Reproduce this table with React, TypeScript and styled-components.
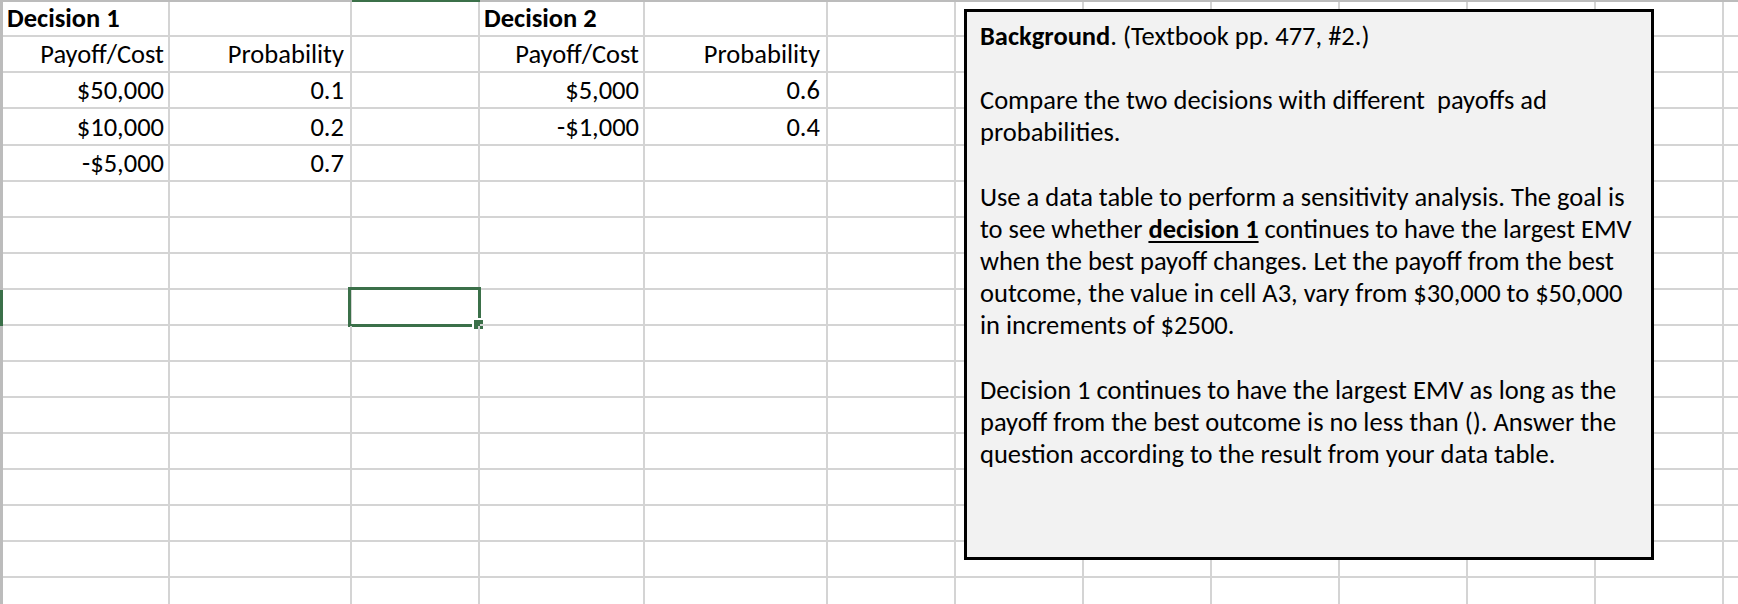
import React from "react";
import styled, { createGlobalStyle, css } from "styled-components";

const GRID = "#d4d4d4";
const EDGE = "#bcbcbc";
const GREEN = "#3b7049";
const FONT = `"Carlito", "Lato", "Liberation Sans", sans-serif`;

const GlobalStyle = createGlobalStyle`
  html, body { margin: 0; padding: 0; background: #fff; }
  body { width: 1738px; height: 604px; overflow: hidden; font-family: ${FONT}; }
`;

const Sheet = styled.div`
  position: relative;
  width: 1738px;
  height: 604px;
  overflow: hidden;
  display: grid;
  grid-template-columns: 3px 167px 182px 128px 165px 183px repeat(8, 128px);
  grid-template-rows: 2px 35px 36px 36px 37px repeat(13, 36px);
  background: #fff;
`;

const Corner = styled.div`
  background: ${EDGE};
`;

const ColEdge = styled.div<{ $selected?: boolean }>`
  background: ${(p) => (p.$selected ? GREEN : EDGE)};
`;

const RowEdge = styled.div<{ $selected?: boolean }>`
  background: ${(p) => (p.$selected ? GREEN : EDGE)};
`;

const Cell = styled.div<{ $align?: "left" | "right"; $bold?: boolean; $padRight: number }>`
  position: relative;
  box-sizing: border-box;
  border-right: 2px solid ${GRID};
  border-bottom: 2px solid ${GRID};
  display: flex;
  align-items: flex-end;
  justify-content: ${(p) => (p.$align === "right" ? "flex-end" : "flex-start")};
  padding: 0 ${(p) => p.$padRight}px 3px 4px;
  font-family: ${FONT};
  font-size: 26.5px;
  line-height: 27px;
  color: #000;
  white-space: nowrap;
  ${(p) =>
    p.$bold &&
    css`
      font-weight: 700;
    `}
`;

const Selection = styled.div`
  position: absolute;
  left: -4px;
  top: -3px;
  right: -3px;
  bottom: -3px;
  border: 3px solid ${GREEN};
  pointer-events: none;
`;

const FillHandle = styled.div`
  position: absolute;
  right: -7px;
  bottom: -7px;
  width: 9px;
  height: 9px;
  background: ${GREEN};
  border: 2px solid #fff;
`;

const TextBox = styled.div`
  position: absolute;
  left: 964px;
  top: 9px;
  width: 690px;
  height: 551px;
  box-sizing: border-box;
  border: 3px solid #000;
  background: #f2f2f2;
  padding: 8px 0 0 13px;
  font-family: ${FONT};
  font-size: 26.5px;
  line-height: 32.15px;
  color: #000;
`;

const Para = styled.p`
  margin: 0 0 32.15px 0;
  white-space: pre;
`;

const Strong = styled.b`
  font-weight: 700;
`;

const StrongU = styled.b`
  font-weight: 700;
  text-decoration: underline;
  text-underline-offset: 3px;
  text-decoration-thickness: 2px;
`;

type CellDef = { t?: string; a?: "left" | "right"; b?: boolean };

const rows: CellDef[][] = [
  [{ t: "Decision 1", b: true }, {}, {}, { t: "Decision 2", b: true }, {}],
  [
    { t: "Payoff/Cost", a: "right" },
    { t: "Probability", a: "right" },
    {},
    { t: "Payoff/Cost", a: "right" },
    { t: "Probability", a: "right" },
  ],
  [
    { t: "$50,000", a: "right" },
    { t: "0.1", a: "right" },
    {},
    { t: "$5,000", a: "right" },
    { t: "0.6", a: "right" },
  ],
  [
    { t: "$10,000", a: "right" },
    { t: "0.2", a: "right" },
    {},
    { t: "-$1,000", a: "right" },
    { t: "0.4", a: "right" },
  ],
  [{ t: "-$5,000", a: "right" }, { t: "0.7", a: "right" }],
];

const NUM_COLS = 13;
const NUM_ROWS = 17;
const SEL_ROW = 8; // row 9 (0-based)
const SEL_COL = 2; // column C
const WIDE_PAD_COLS = [1, 4]; // B and E

export default function App() {
  const cells: React.ReactNode[] = [];
  cells.push(<Corner key="corner" />);
  for (let c = 0; c < NUM_COLS; c++) {
    cells.push(<ColEdge key={`h${c}`} $selected={c === SEL_COL} />);
  }
  for (let r = 0; r < NUM_ROWS; r++) {
    cells.push(<RowEdge key={`r${r}`} $selected={r === SEL_ROW} />);
    for (let c = 0; c < NUM_COLS; c++) {
      const def = rows[r]?.[c] ?? {};
      const selected = r === SEL_ROW && c === SEL_COL;
      cells.push(
        <Cell
          key={`${r}-${c}`}
          $align={def.a}
          $bold={def.b}
          $padRight={WIDE_PAD_COLS.includes(c) ? 6 : 4}
        >
          {def.t}
          {selected && (
            <Selection>
              <FillHandle />
            </Selection>
          )}
        </Cell>
      );
    }
  }

  return (
    <>
      <GlobalStyle />
      <Sheet>
        {cells}
        <TextBox>
          <Para>
            <Strong>Background</Strong>. (Textbook pp. 477, #2.)
          </Para>
          <Para>
            {"Compare the two decisions with different  payoffs ad"}
            <br />
            probabilities.
          </Para>
          <Para>
            Use a data table to perform a sensitivity analysis. The goal is
            <br />
            to see whether <StrongU>decision 1</StrongU> continues to have the largest EMV
            <br />
            when the best payoff changes. Let the payoff from the best
            <br />
            outcome, the value in cell A3, vary from $30,000 to $50,000
            <br />
            in increments of $2500.
          </Para>
          <Para>
            Decision 1 continues to have the largest EMV as long as the
            <br />
            payoff from the best outcome is no less than (). Answer the
            <br />
            question according to the result from your data table.
          </Para>
        </TextBox>
      </Sheet>
    </>
  );
}
